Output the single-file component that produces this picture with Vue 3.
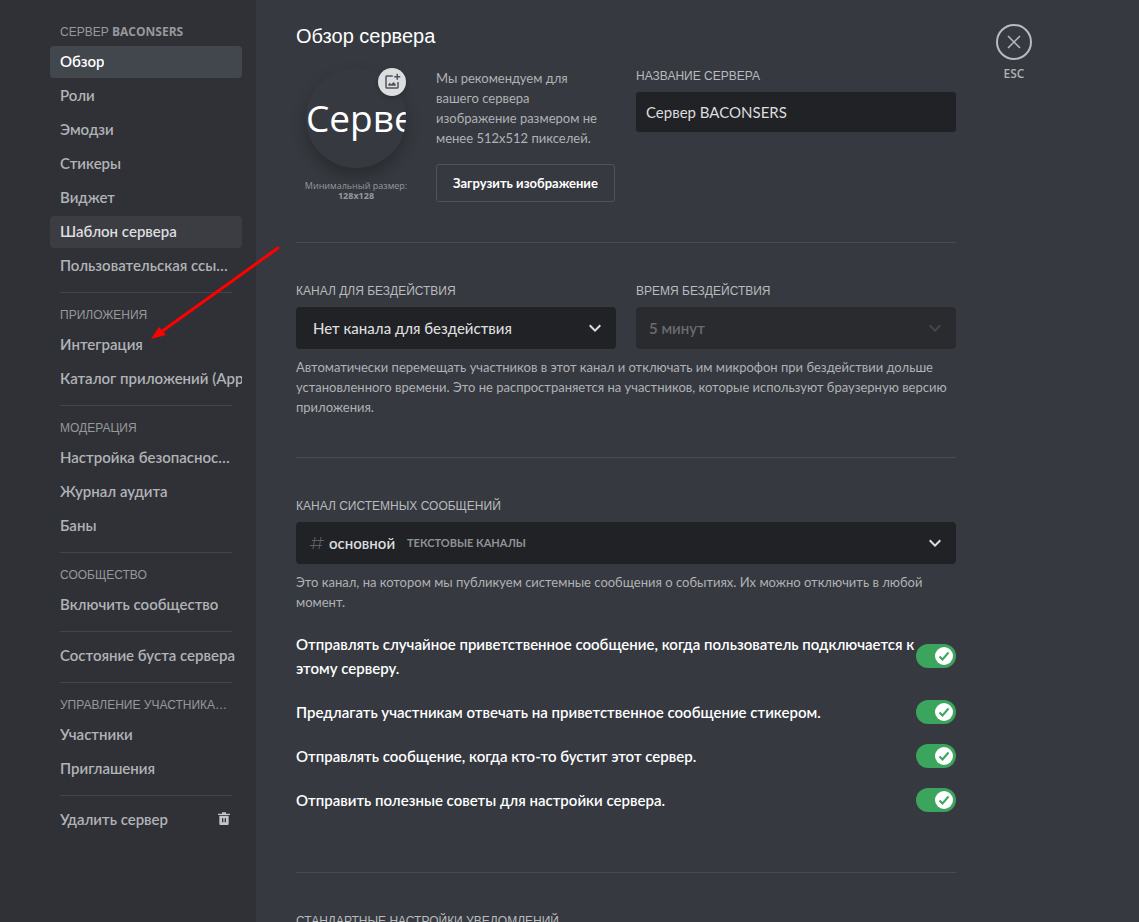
<script setup>
import { ref } from 'vue'

const groups = [
  {
    title: 'Сервер',
    name: 'BACONSERS',
    items: [
      { label: 'Обзор', state: 'active' },
      { label: 'Роли' },
      { label: 'Эмодзи' },
      { label: 'Стикеры' },
      { label: 'Виджет' },
      { label: 'Шаблон сервера', state: 'hovered' },
      { label: 'Пользовательская ссылка' },
    ],
  },
  {
    title: 'Приложения',
    items: [{ label: 'Интеграция' }, { label: 'Каталог приложений (App Directory)', clip: true }],
  },
  {
    title: 'Модерация',
    items: [{ label: 'Настройка безопасности' }, { label: 'Журнал аудита' }, { label: 'Баны' }],
  },
  { title: 'Сообщество', items: [{ label: 'Включить сообщество' }] },
  { items: [{ label: 'Состояние буста сервера', clip: true }] },
  {
    title: 'Управление участниками',
    items: [{ label: 'Участники' }, { label: 'Приглашения' }],
  },
  { items: [{ label: 'Удалить сервер', icon: 'trash' }] },
]

const serverName = ref('Сервер BACONSERS')

const switches = ref([
  { id: 'welcome', on: true, label: 'Отправлять случайное приветственное сообщение, когда пользователь подключается к этому серверу.' },
  { id: 'sticker', on: true, label: 'Предлагать участникам отвечать на приветственное сообщение стикером.' },
  { id: 'boost', on: true, label: 'Отправлять сообщение, когда кто-то бустит этот сервер.' },
  { id: 'tips', on: true, label: 'Отправить полезные советы для настройки сервера.' },
])
</script>

<template>
  <div class="page">
    <aside class="sidebar">
      <nav class="nav" aria-label="Настройки сервера">
        <section v-for="(group, i) in groups" :key="i" class="group">
          <h2 v-if="group.title" class="group-title">
            {{ group.title }} <b v-if="group.name">{{ group.name }}</b>
          </h2>
          <a
            v-for="item in group.items"
            :key="item.label"
            href="#"
            class="item"
            :class="[item.state, { clip: item.clip }]"
          >
            <span class="item-label">{{ item.label }}</span>
            <svg v-if="item.icon" class="trash" viewBox="0 0 24 24" aria-hidden="true">
              <path d="M15 3.999V2H9V3.999H3V5.999H21V3.999H15Z" />
              <path d="M5 6.999V19C5 20.102 5.898 21 7 21H17C18.103 21 19 20.102 19 19V6.999H5ZM11 17H9V11H11V17ZM15 17H13V11H15V17Z" />
            </svg>
          </a>
        </section>
      </nav>
    </aside>

    <main class="main">
      <div class="content">
        <h1 class="title">Обзор сервера</h1>

        <section class="section columns">
          <div class="icon-block">
            <div class="icon-col">
              <div class="avatar-wrap">
                <div class="avatar"><span>Сервер</span></div>
                <button class="badge" type="button" aria-label="Изменить значок">
                  <svg viewBox="0 0 24 24" aria-hidden="true">
                    <path d="M13 3H5C3.9 3 3 3.9 3 5V19C3 20.1 3.9 21 5 21H19C20.1 21 21 20.1 21 19V12H19V19H5V5H13V3Z" />
                    <path d="M7 17V15L9 13L11 15L14 12L17 15V17Z" />
                    <path d="M18 1H20V4H23V6H20V9H18V6H15V4H18Z" />
                  </svg>
                </button>
              </div>
              <p class="min-size">Минимальный размер: <b>128x128</b></p>
            </div>
            <div class="icon-info">
              <p class="hint">Мы рекомендуем для вашего сервера изображение размером не менее 512x512 пикселей.</p>
              <button class="upload" type="button">Загрузить изображение</button>
            </div>
          </div>
          <div class="field name-field">
            <label class="label" for="server-name">Название сервера</label>
            <input id="server-name" v-model="serverName" class="input" type="text" />
          </div>
        </section>

        <section class="section ruled">
          <div class="columns">
            <div class="field">
              <label class="label" for="afk-channel">Канал для бездействия</label>
              <div class="select-wrap">
                <select id="afk-channel" class="select">
                  <option>Нет канала для бездействия</option>
                </select>
                <svg class="chevron" viewBox="0 0 24 24" aria-hidden="true"><path d="M16.590 8.590L12 13.170L7.410 8.590L6 10L12 16L18 10Z" /></svg>
              </div>
            </div>
            <div class="field">
              <label class="label" for="afk-time">Время бездействия</label>
              <div class="select-wrap disabled">
                <select id="afk-time" class="select" disabled>
                  <option>5 минут</option>
                </select>
                <svg class="chevron" viewBox="0 0 24 24" aria-hidden="true"><path d="M16.590 8.590L12 13.170L7.410 8.590L6 10L12 16L18 10Z" /></svg>
              </div>
            </div>
          </div>
          <p class="hint below">Автоматически перемещать участников в этот канал и отключать им микрофон при бездействии дольше установленного времени. Это не распространяется на участников, которые используют браузерную версию приложения.</p>
        </section>

        <section class="section ruled">
          <div class="field">
            <label class="label" for="system-channel">Канал системных сообщений</label>
            <div class="select-wrap channel">
              <select id="system-channel" class="select">
                <option>основной</option>
              </select>
              <div class="channel-face">
                <svg class="hash" viewBox="0 0 16 16" aria-hidden="true"><path d="M6 2L4 14M12 2L10 14M3 5.500H15M1 10.500H13" /></svg>
                <span class="category">Текстовые каналы</span>
              </div>
              <svg class="chevron" viewBox="0 0 24 24" aria-hidden="true"><path d="M16.590 8.590L12 13.170L7.410 8.590L6 10L12 16L18 10Z" /></svg>
            </div>
          </div>
          <p class="hint below">Это канал, на котором мы публикуем системные сообщения о событиях. Их можно отключить в любой момент.</p>
          <div class="switches">
            <div v-for="s in switches" :key="s.id" class="switch-row">
              <label :for="s.id" class="switch-label">{{ s.label }}</label>
              <span class="switch">
                <input :id="s.id" v-model="s.on" type="checkbox" role="switch" />
                <svg class="knob" :class="{ off: !s.on }" viewBox="0 0 18 18" aria-hidden="true">
                  <circle cx="9" cy="9" r="9" />
                  <path d="M4.500 9.500L7.500 12.500L13.500 5.500" />
                </svg>
              </span>
            </div>
          </div>
        </section>

        <section class="section ruled">
          <h2 class="label">Стандартные настройки уведомлений</h2>
        </section>
      </div>

      <button class="close" type="button">
        <span class="close-ring">
          <svg viewBox="0 0 24 24" aria-hidden="true"><path d="M4 4L20 20M20 4L4 20" /></svg>
        </span>
        ESC
      </button>
    </main>

    <svg class="arrow" viewBox="0 0 130 96" aria-hidden="true">
      <path class="shaft" d="M127 3L10 87" />
      <path class="head" d="M0 94L8 82L15 90Z" />
    </svg>
  </div>
</template>

<style>
body {
  background: #36393f;
}
</style>

<style scoped>
* {
  box-sizing: border-box;
}

.page {
  position: relative;
  display: flex;
  height: 100vh;
  overflow: hidden;
  background: #36393f;
  color: #b9bbbe;
  font-family: Lato, "Open Sans", sans-serif;
  font-size: 15px;
}

h1, h2, p {
  margin: 0;
}

button, input, select {
  font-family: inherit;
}

.sidebar {
  flex: 0 0 256px;
  min-width: 0;
  padding: 18px 14px 0 50px;
  background: #2f3136;
}

.group {
  display: flex;
  flex-direction: column;
}

.group + .group::before {
  content: "";
  height: 1px;
  margin: 8px 10px;
  background: #42454a;
}

.group-title {
  padding: 6px 10px;
  overflow: hidden;
  color: #96989d;
  font-family: "Liberation Sans", Arial, sans-serif;
  font-size: 12px;
  font-weight: 400;
  line-height: 16px;
  text-overflow: ellipsis;
  text-transform: uppercase;
  white-space: nowrap;
}

.group-title b {
  font-family: "Open Sans", sans-serif;
}

.item {
  display: flex;
  align-items: center;
  justify-content: space-between;
  height: 32px;
  margin-bottom: 2px;
  padding: 0 10px 2px;
  overflow: hidden;
  border-radius: 4px;
  color: #b1b3b6;
  font-size: 15px;
  font-weight: 600;
  line-height: 20px;
  text-decoration: none;
  white-space: nowrap;
}

.item-label {
  overflow: hidden;
  text-overflow: ellipsis;
}

.clip .item-label {
  overflow: visible;
}

.item.active {
  background: #42464d;
  color: #fff;
}

.item.hovered {
  background: #3b3d43;
  color: #dcddde;
}

.trash {
  width: 16px;
  height: 16px;
  fill: #c4c6c9;
}

.main {
  display: flex;
  flex: 1 1 0;
  gap: 40px;
  min-width: 0;
  padding: 24px 40px 0;
  overflow-y: auto;
  scrollbar-width: none;
}

.content {
  flex: 1 1 0;
  min-width: 0;
  max-width: 660px;
}

.title {
  margin-bottom: 20px;
  color: #fff;
  font-family: "Liberation Sans", Arial, sans-serif;
  font-size: 20px;
  font-weight: 400;
  line-height: 24px;
}

.section {
  padding-bottom: 40px;
}

.ruled {
  border-top: 1px solid #484b52;
  padding-top: 40px;
}

.columns {
  display: grid;
  grid-template-columns: minmax(0, 1fr) minmax(0, 1fr);
  gap: 20px;
}

.icon-block {
  display: flex;
  gap: 20px;
}

.icon-col {
  flex: 0 0 120px;
}

.avatar-wrap {
  position: relative;
  width: 100px;
  height: 100px;
  margin: 0 auto;
}

.avatar {
  display: flex;
  align-items: center;
  width: 100px;
  height: 100px;
  overflow: hidden;
  border-radius: 50%;
  box-shadow: 0 8px 16px rgba(0, 0, 0, 0.24);
  color: #fff;
  font-family: "Open Sans", sans-serif;
  font-size: 37px;
  line-height: 50px;
  white-space: nowrap;
}

.badge {
  position: absolute;
  top: 0;
  right: 0;
  display: grid;
  place-items: center;
  width: 28px;
  height: 28px;
  padding: 0;
  border: 0;
  border-radius: 50%;
  background: #dcddde;
  box-shadow: 0 2px 4px rgba(0, 0, 0, 0.2);
}

.badge svg {
  width: 18px;
  height: 18px;
  fill: #4f545c;
}

.min-size {
  margin-top: 13px;
  color: #96989d;
  font-family: "Open Sans", sans-serif;
  font-size: 9px;
  line-height: 10px;
  text-align: center;
}

.min-size b {
  display: block;
}

.icon-info {
  flex: 1 1 0;
  min-width: 0;
}

.hint {
  color: #b0b2b6;
  font-size: 13px;
  line-height: 20px;
}

.icon-info .hint {
  padding-right: 12px;
}

.hint.below {
  margin-top: 8px;
}

.upload {
  height: 38px;
  margin-top: 16px;
  padding: 0 16px;
  border: 1px solid #4f545c;
  border-radius: 3px;
  background: transparent;
  color: #fff;
  font-size: 13px;
  font-weight: 700;
  line-height: 16px;
  white-space: nowrap;
}

.field {
  display: flex;
  flex-direction: column;
  min-width: 0;
}

.label {
  margin-bottom: 8px;
  color: #b9bbbe;
  font-family: "Liberation Sans", Arial, sans-serif;
  font-size: 12px;
  font-weight: 400;
  line-height: 16px;
  text-transform: uppercase;
}

.input {
  width: 100%;
  height: 40px;
  padding: 0 10px;
  border: 0;
  border-radius: 3px;
  background: #202225;
  color: #dcddde;
  font-size: 15px;
}

.select-wrap {
  display: grid;
  align-items: center;
  border-radius: 4px;
  background: #202225;
  color: #dcddde;
}

.select-wrap > * {
  grid-area: 1 / 1;
}

.select {
  width: 100%;
  height: 42px;
  padding: 0 40px 0 17px;
  border: 0;
  border-radius: 4px;
  appearance: none;
  background: transparent;
  color: inherit;
  font-size: 15px;
  font-weight: 500;
}

.disabled {
  background: #2a2b2f;
  color: #6a6c70;
}

.disabled .select {
  padding-left: 13px;
  font-weight: 600;
  opacity: 1;
}

.chevron {
  justify-self: end;
  width: 24px;
  height: 24px;
  margin-right: 9px;
  fill: currentColor;
  pointer-events: none;
}

.disabled .chevron {
  fill: #44464b;
}

.channel .select {
  padding-left: 33px;
  font-weight: 600;
}

.channel-face {
  display: flex;
  align-items: center;
  gap: 82px;
  padding-left: 13px;
  pointer-events: none;
}

.hash {
  width: 16px;
  height: 16px;
  fill: none;
  stroke: #5c5f65;
  stroke-width: 1;
}

.category {
  color: #8e9297;
  font-size: 11px;
  font-weight: 700;
  line-height: 16px;
  text-transform: uppercase;
}

.switches {
  display: grid;
  gap: 20px;
  margin: 20px 0;
}

.switch-row {
  display: flex;
  align-items: center;
}

.switch-label {
  flex: 1 1 0;
  color: #fff;
  font-size: 15px;
  font-weight: 600;
  line-height: 24px;
}

.switch {
  display: grid;
  flex: 0 0 40px;
  align-items: center;
}

.switch > * {
  grid-area: 1 / 1;
}

.switch input {
  width: 40px;
  height: 24px;
  margin: 0;
  border-radius: 12px;
  appearance: none;
  background: #72767d;
}

.switch input:checked {
  background: #3ba55d;
}

.knob {
  justify-self: end;
  width: 18px;
  height: 18px;
  margin: 0 3px;
  fill: #fff;
  pointer-events: none;
}

.knob.off {
  justify-self: start;
}

.knob path {
  fill: none;
  stroke: #3ba55d;
  stroke-width: 2;
}

.close {
  display: flex;
  flex: 0 0 36px;
  flex-direction: column;
  align-items: center;
  align-self: flex-start;
  gap: 6px;
  padding: 0;
  border: 0;
  background: none;
  color: #b0b2b6;
  font-family: "Open Sans", sans-serif;
  font-size: 12px;
  font-weight: 600;
  line-height: 16px;
}

.close-ring {
  display: grid;
  place-items: center;
  width: 36px;
  height: 36px;
  border: 2px solid #b9bbbe;
  border-radius: 50%;
}

.close svg {
  width: 18px;
  height: 18px;
  fill: none;
  stroke: #b9bbbe;
  stroke-width: 2;
}

.arrow {
  position: absolute;
  top: 245px;
  left: 151px;
  width: 130px;
  height: 96px;
  pointer-events: none;
}

.shaft {
  fill: none;
  stroke: #f00;
  stroke-linecap: round;
  stroke-width: 3;
}

.head {
  fill: #f00;
}
</style>
